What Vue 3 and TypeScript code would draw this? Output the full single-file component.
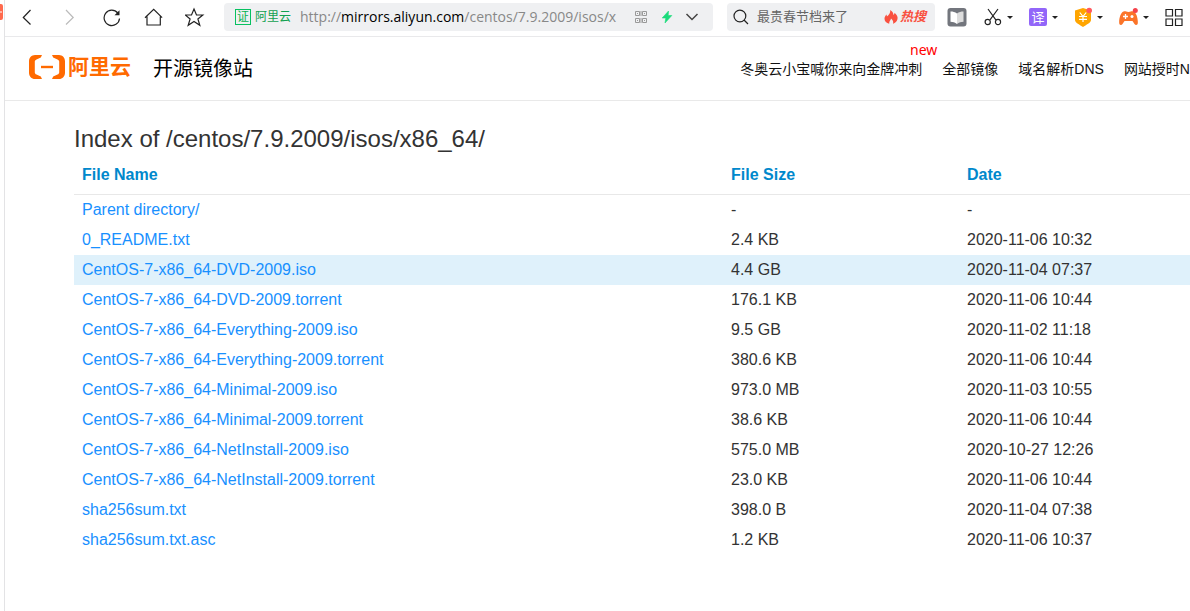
<script setup lang="ts">
import { ref } from 'vue'

interface Entry {
  name: string
  size: string
  date: string
  active?: boolean
}

const keyword = ref('最贵春节档来了')
const navLinks: { label: string; badge?: string }[] = [
  { label: '冬奥云小宝喊你来向金牌冲刺', badge: 'new' },
  { label: '全部镜像' },
  { label: '域名解析DNS' },
  { label: '网站授时N' },
]
const entries: Entry[] = [
  { name: 'Parent directory/', size: '-', date: '-' },
  { name: '0_README.txt', size: '2.4 KB', date: '2020-11-06 10:32' },
  { name: 'CentOS-7-x86_64-DVD-2009.iso', size: '4.4 GB', date: '2020-11-04 07:37', active: true },
  { name: 'CentOS-7-x86_64-DVD-2009.torrent', size: '176.1 KB', date: '2020-11-06 10:44' },
  { name: 'CentOS-7-x86_64-Everything-2009.iso', size: '9.5 GB', date: '2020-11-02 11:18' },
  { name: 'CentOS-7-x86_64-Everything-2009.torrent', size: '380.6 KB', date: '2020-11-06 10:44' },
  { name: 'CentOS-7-x86_64-Minimal-2009.iso', size: '973.0 MB', date: '2020-11-03 10:55' },
  { name: 'CentOS-7-x86_64-Minimal-2009.torrent', size: '38.6 KB', date: '2020-11-06 10:44' },
  { name: 'CentOS-7-x86_64-NetInstall-2009.iso', size: '575.0 MB', date: '2020-10-27 12:26' },
  { name: 'CentOS-7-x86_64-NetInstall-2009.torrent', size: '23.0 KB', date: '2020-11-06 10:44' },
  { name: 'sha256sum.txt', size: '398.0 B', date: '2020-11-04 07:38' },
  { name: 'sha256sum.txt.asc', size: '1.2 KB', date: '2020-11-06 10:37' },
]
</script>

<template>
  <div class="window">
    <aside class="edge">
      <svg width="3" height="16" viewBox="0 0 3 16"><path d="M0 0h1q2 0 2 2v12q0 2-2 2H0z" fill="#ff6a4d" /><path d="M0 8h2" stroke="#fff" /></svg>
    </aside>
    <div class="view">
      <div class="toolbar">
        <div class="history">
          <button type="button" aria-label="后退">
            <svg width="20" height="20" viewBox="0 0 20 20"><path d="M13.500 3 6.300 10.500l7.200 7" class="line" /></svg>
          </button>
          <button type="button" aria-label="前进">
            <svg width="20" height="20" viewBox="0 0 20 20"><path d="m7 3 7.200 7.500-7.200 7" class="line faint" /></svg>
          </button>
          <button type="button" aria-label="刷新">
            <svg width="20" height="20" viewBox="0 0 20 20">
              <path d="M16.800 6A7.700 7.700 0 1 0 18.500 11.500" class="line" />
              <path d="M18.500 3.200v5h-5z" fill="#222" />
            </svg>
          </button>
          <button type="button" aria-label="主页">
            <svg width="20" height="20" viewBox="0 0 20 20"><path d="M2 10.700 10.700 2.300l8.400 8.400M4 9.500V18h13.300V9.500" class="line" /></svg>
          </button>
          <button type="button" aria-label="收藏">
            <svg width="20" height="20" viewBox="2 0 20 20"><path d="m11 2 2.500 6h6.300l-4.900 4 1.900 6.300-5.800-3.900-5.800 3.900L7.100 12 2.200 8h6.300z" class="line" /></svg>
          </button>
        </div>

        <div class="address">
          <span class="cert-mark">证</span>
          <span class="cert-name">阿里云</span>
          <div class="url" role="textbox" aria-label="地址" tabindex="0">http://<b>mirrors.aliyun.com</b>/centos/7.9.2009/isos/x</div>
          <button type="button" aria-label="二维码">
            <svg width="16" height="12" viewBox="-2 0 16 12" fill="none" stroke="#999">
              <path d="M.5.500h4v4h-4zM7.500.500h4v4h-4zM.5 7.500h4v4h-4zM7.500 7.500h4v4h-4zM2 2.500h1M9 2.500h1M2 9.500h1M9 9.500h1M6 0v5M6 7v5" />
            </svg>
          </button>
          <button type="button" aria-label="极速模式">
            <svg width="14" height="14" viewBox="-1 0 14 14"><path d="M7.500 1 1.200 8h3.600L4 13l6.800-7.500H7.200z" fill="#1bdb7b" stroke="#1bdb7b" stroke-width=".6" /></svg>
          </button>
          <button type="button" aria-label="展开">
            <svg width="14" height="8" viewBox="0 0 14 8"><path d="m1.500 1 5.500 5.500L12.500 1" class="line dim" /></svg>
          </button>
        </div>

        <label class="search">
          <svg width="16" height="16" viewBox="0 0 16 16"><path d="M12.800 7a5.900 5.900 0 1 1-11.800 0 5.900 5.900 0 0 1 11.800 0zM11 11l4 4" class="line" /></svg>
          <input v-model="keyword" type="text" aria-label="搜索" />
          <span class="hot">
            <svg width="14" height="14" viewBox="0 0 14 14">
              <path d="M6.300 0c3 2 3.100 3.600 3 5 .9-.5 1.200-1.300 1.200-2.200C12.800 4.600 14 6.600 13.500 9c-.5 2.500-2.300 4-4.500 4.700.7-2-.1-3.600-2-5.200C6.900 10.300 4.900 11 5.200 13.700 2.500 13 .500 11.300.500 8.700c0-2 1-3 1.800-4.300.5.7.6 1.300.6 2C5 5 6.500 3 6.300 0z" fill="#f9503f" />
            </svg>热搜
          </span>
        </label>

        <div class="tools">
          <button type="button" class="book" aria-label="阅读">
            <svg width="20" height="20" viewBox="0 0 20 20">
              <rect x=".5" y="1" width="19" height="18.500" rx="3" fill="#73767d" />
              <path d="M3.500 4.500c2.500 0 4.500.5 6.500 2V17c-2-1.500-4-2-6.500-2.200z" fill="#fff" />
              <path d="M16.500 4.500C14 4.500 12 5 10 6.500V17c2-1.500 4-2 6.500-2.200z" fill="#ddd" />
            </svg>
          </button>
          <button type="button" aria-label="截图">
            <svg width="18" height="18" viewBox="0 0 18 18">
              <path d="m4 1 8 11.200M14 1 5.800 12.200M6.300 14a2.600 2.600 0 1 1-5.200 0 2.600 2.600 0 0 1 5.200 0zM16.600 14a2.600 2.600 0 1 1-5.200 0 2.600 2.600 0 0 1 5.200 0z" class="line" />
            </svg>
            <i class="caret"></i>
          </button>
          <button type="button" aria-label="翻译">
            <span class="translate">译</span>
            <i class="caret"></i>
          </button>
          <button type="button" aria-label="优惠">
            <svg width="18" height="20" viewBox="0 0 18 20">
              <path d="M9 1 17 3.500V13c0 3-5 4.800-8 7-3-2.200-8-4-8-7V3.500z" fill="#ffa500" />
              <path d="m5.800 5.500 3.200 4 3.200-4M5 9.500h8M5 12.300h8M9 9.500V15" fill="none" stroke="#fff" stroke-width="1.200" />
              <circle cx="15.200" cy="3.500" r="2.800" fill="#ff5a5f" />
            </svg>
            <i class="caret"></i>
          </button>
          <button type="button" aria-label="游戏">
            <svg width="19" height="18" viewBox="0 0 19 18">
              <path d="M4.500 3.500c2-.7 2.500.5 5 .5s3-1.200 5-.5c3 1 4.600 7.500 4.300 11.500-.2 2.500-2.300 2.500-3.500.8L13.500 13h-8l-1.800 2.800C2.500 17.500.4 17.500.2 15c-.3-4 1.300-10.500 4.300-11.500z" fill="#fb7429" />
              <path d="M4 8.500h5M6.500 6v5" fill="none" stroke="#fff" stroke-width="1.300" />
              <circle cx="13" cy="8.500" r="1.500" fill="#fff" />
              <circle cx="16.300" cy="2.500" r="2.500" fill="#f5424b" />
            </svg>
            <i class="caret"></i>
          </button>
          <button type="button" aria-label="应用">
            <svg width="18" height="18" viewBox="0 0 18 18" fill="none" stroke="#222" stroke-width="1.200">
              <path d="M1 1.500h6.500V8H1zM10.500 1.500H17V8h-6.500zM1 11h6.500v6.500H1zM10.500 11H17v6.500h-6.500z" />
            </svg>
          </button>
        </div>
      </div>

      <header class="site-header">
        <a href="#" class="logo">
          <svg width="36" height="24" viewBox="0 0 36 24" fill="#ff6a00">
            <path d="M13 0H6C2.500 0 0 2.800 0 6.300v11.400C0 21.200 2.500 24 6 24h7l-1.200-2.500L7.500 19.500c-1.200-.5-1.700-1.200-1.700-2.300V6.800c0-1.100.5-1.800 1.700-2.300l4.300-2zM23 0h7c3.500 0 6 2.800 6 6.300v11.400c0 3.500-2.500 6.300-6 6.300h-7l1.200-2.500 4.300-2c1.200-.5 1.700-1.200 1.700-2.300V6.800c0-1.100-.5-1.800-1.700-2.300l-4.300-2z" />
            <path d="M12 10.800h12v2.400H12z" />
          </svg>
          <span>阿里云</span>
        </a>
        <span class="site-name">开源镜像站</span>
        <nav>
          <a v-for="link in navLinks" :key="link.label" href="#">
            {{ link.label }}<sup v-if="link.badge">{{ link.badge }}</sup>
          </a>
        </nav>
      </header>

      <main>
        <h1>Index of /centos/7.9.2009/isos/x86_64/</h1>
        <table>
          <colgroup><col class="c-name" /><col class="c-size" /><col class="c-date" /></colgroup>
          <thead>
            <tr>
              <th scope="col"><a href="#">File Name</a></th>
              <th scope="col"><a href="#">File Size</a></th>
              <th scope="col"><a href="#">Date</a></th>
            </tr>
          </thead>
          <tbody>
            <tr v-for="entry in entries" :key="entry.name" :class="{ active: entry.active }">
              <td><a href="#">{{ entry.name }}</a></td>
              <td>{{ entry.size }}</td>
              <td>{{ entry.date }}</td>
            </tr>
          </tbody>
        </table>
      </main>
    </div>
  </div>
</template>

<style>
body {
  background: #fff;
}
</style>

<style scoped>
.window {
  display: flex;
  min-height: 100vh;
  overflow: hidden;
  color: #333;
  font: 16px/24px "Liberation Sans", "Noto Sans CJK SC", sans-serif;
}
.window * {
  box-sizing: border-box;
}
a {
  color: #1890ff;
  text-decoration: none;
}
button {
  display: flex;
  align-items: center;
  justify-content: center;
  padding: 0;
  border: 0;
  background: none;
  cursor: pointer;
}
svg {
  display: block;
  flex: none;
}
.line {
  fill: none;
  stroke: #222;
  stroke-width: 1.2;
}
.line.faint {
  stroke: #bbb;
}
.line.dim {
  stroke: #444;
  stroke-width: 1.5;
}
.edge {
  flex: none;
  width: 5px;
  padding-top: 4px;
  border-right: 1px solid #e3e3e5;
}
.view {
  flex: 1;
  min-width: 0;
}
.toolbar {
  display: flex;
  align-items: center;
  height: 37px;
  padding: 0 7px 2px 12px;
  border-bottom: 1px solid #e9e9eb;
}
.history {
  display: flex;
  gap: 22px;
  margin-right: 19px;
}
.history button {
  width: 20px;
  height: 28px;
}
.address,
.search {
  display: flex;
  align-items: center;
  height: 28px;
  border-radius: 4px;
  background: #eff0f2;
}
.address {
  flex: 1;
  min-width: 0;
  margin-right: 14px;
  padding: 0 14px 0 11px;
}
.address button {
  margin-left: 11px;
}
.cert-mark {
  width: 16px;
  height: 16px;
  border: 1px solid #07c160;
  color: #07b352;
  font-size: 12px;
  line-height: 14px;
  text-align: center;
}
.cert-name {
  margin: 0 9px 0 4px;
  color: #12a150;
  font-size: 12px;
}
.url {
  flex: 1;
  min-width: 0;
  overflow: hidden;
  color: #888;
  font-family: "Open Sans", "Noto Sans", sans-serif;
  font-size: 14px;
  white-space: nowrap;
}
.url b {
  color: #000;
  font-weight: 400;
}
.search {
  width: 208px;
  margin-right: 11px;
  padding: 0 9px 0 6px;
}
.search input {
  flex: 1;
  min-width: 0;
  margin-left: 8px;
  padding: 0;
  border: 0;
  outline: 0;
  background: none;
  color: #666;
  font: 13px/20px "Liberation Sans", "Noto Sans CJK SC", sans-serif;
}
.hot {
  display: flex;
  align-items: center;
  gap: 2px;
  color: #f9503f;
  font-size: 13px;
  font-style: italic;
  font-weight: 700;
}
.tools {
  display: flex;
  align-items: center;
  gap: 16px;
}
.tools button {
  gap: 5px;
  height: 28px;
}
.tools .book {
  width: 22px;
}
.caret {
  width: 6px;
  border: 3px solid transparent;
  border-top-color: #222;
  border-bottom: 0;
}
.translate {
  width: 18px;
  height: 18px;
  border-radius: 2px;
  background: #9266f9;
  color: #fff;
  font: 13px/18px "Noto Sans CJK SC", sans-serif;
}
.site-header {
  display: flex;
  align-items: center;
  height: 64px;
  padding-left: 24px;
  border-bottom: 1px solid #e9e9e9;
  white-space: nowrap;
}
.logo {
  display: flex;
  align-items: center;
  gap: 3px;
  padding-bottom: 3px;
  color: #ff6a00;
  font-size: 21px;
  font-weight: 700;
}
.site-name {
  margin-left: 22px;
  color: #000;
  font-size: 20px;
}
nav {
  display: flex;
  gap: 20px;
  margin-left: auto;
}
nav a {
  position: relative;
  color: #111;
  font-size: 14px;
}
nav sup {
  position: absolute;
  right: -15px;
  bottom: 22px;
  color: #f00;
  font: 14px/18px "Noto Sans", sans-serif;
}
main {
  padding: 26px 0 24px 69px;
}
h1 {
  margin: 0;
  font-size: 24px;
  font-weight: 400;
  line-height: 24px;
}
table {
  width: calc(100% + 64px);
  margin-top: 8px;
  border-collapse: collapse;
  table-layout: fixed;
}
.c-name {
  width: 55%;
}
.c-size {
  width: 20%;
}
.c-date {
  width: 25%;
}
th {
  padding: 4px 8px 7px;
  border-bottom: 1px solid #e8e8e8;
  text-align: left;
}
th a {
  color: #0088cc;
}
td {
  padding: 3px 8px;
}
.active {
  background: #dff1fb;
}
</style>
